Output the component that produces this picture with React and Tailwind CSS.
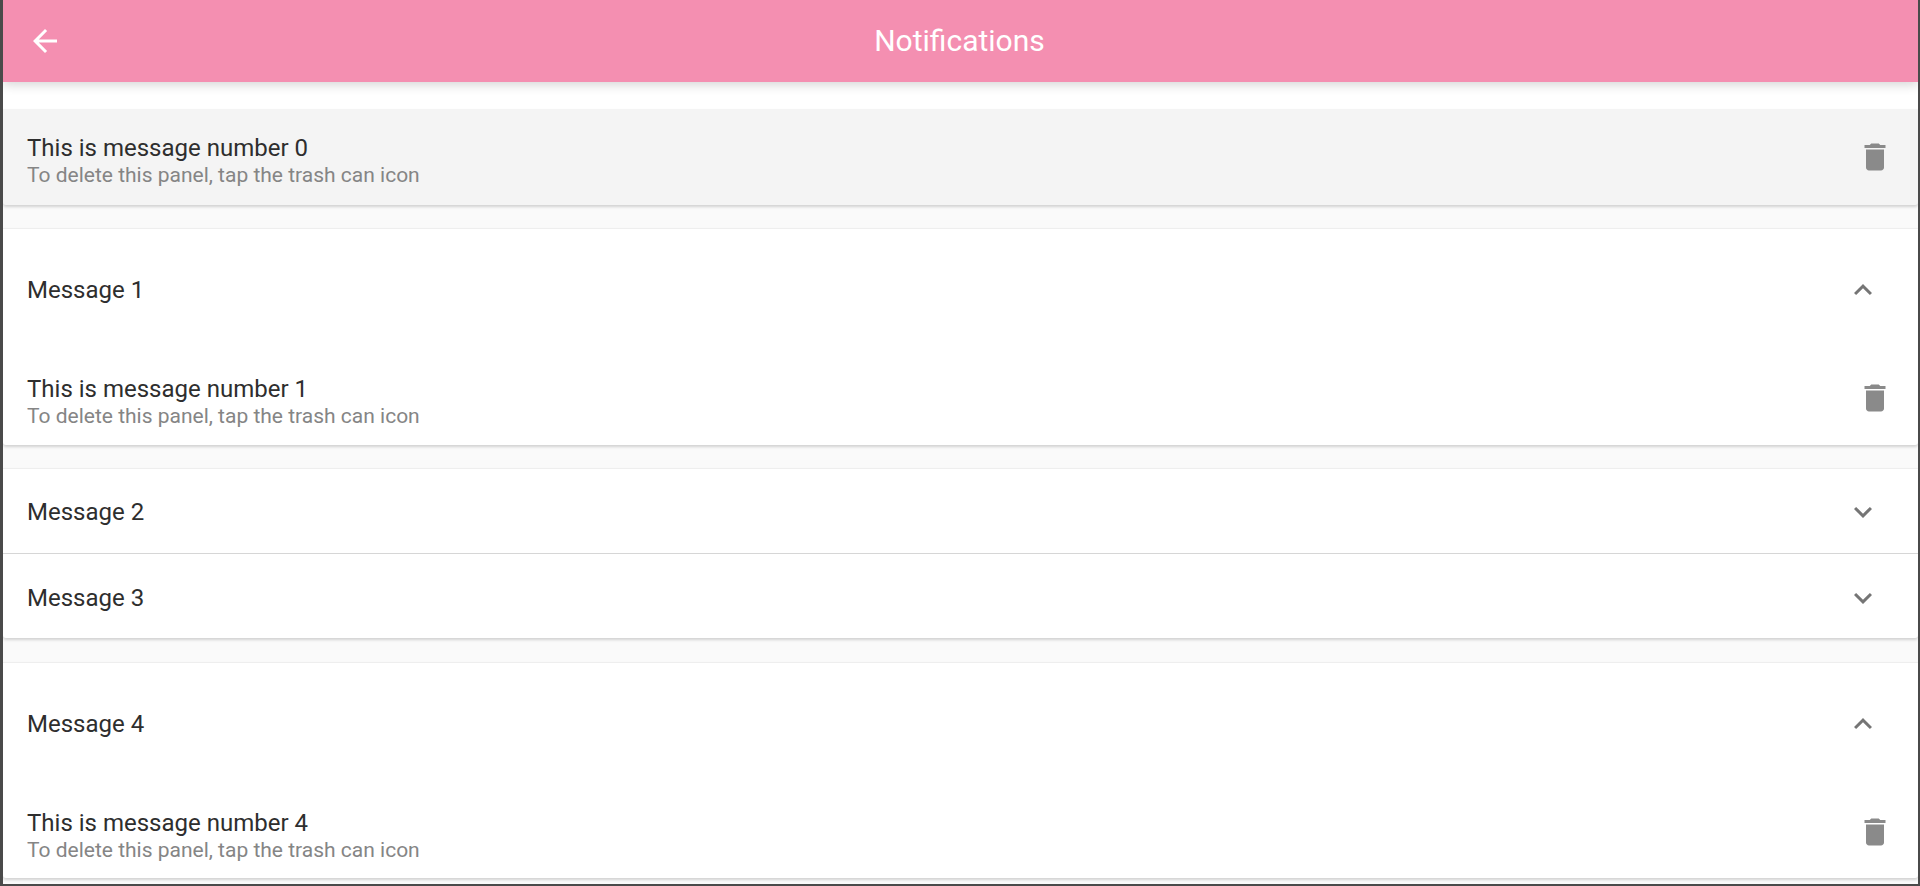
const TRASH = "M6 19c0 1.1.9 2 2 2h8c1.1 0 2-.9 2-2V7H6v12zM19 4h-3.5l-1-1h-5l-1 1H5v2h14V4z";
const UP = "M12 8l-6 6 1.41 1.41L12 10.83l4.59 4.58L18 14z";
const DOWN = "M16.59 8.59L12 13.17 7.41 8.59 6 10l6 6 6-6z";
const BACK = "M20 11H7.83l5.59-5.59L12 4l-8 8 8 8 1.41-1.41L7.83 13H20v-2z";

function Icon({ d, className }) {
  return (
    <svg viewBox="0 0 24 24" className={className} fill="currentColor">
      <path d={d} />
    </svg>
  );
}

function MessageBody({ n, className }) {
  return (
    <div className={"flex items-center pl-[24px] pr-[25px] " + className}>
      <div className="flex-1 min-w-0 pt-[6px]">
        <div className="text-[24px] leading-[29px] text-[#2e2e2e]">This is message number {n}</div>
        <div className="text-[21px] leading-[24px] text-[#858585]">To delete this panel, tap the trash can icon</div>
      </div>
      <Icon d={TRASH} className="w-[36px] h-[36px] text-[#8a8a8a]" />
    </div>
  );
}

function Head({ label, open, className }) {
  return (
    <div className={"flex items-center pl-[24px] pr-[37px] " + className}>
      <div className="flex-1 text-[24px] leading-[28px] text-[#2e2e2e]">{label}</div>
      <Icon d={open ? UP : DOWN} className="w-[36px] h-[36px] text-[#757575]" />
    </div>
  );
}

const shadow = "shadow-[0_2px_3px_rgba(0,0,0,0.16)]";

export default function App() {
  return (
    <div className="h-[886px] overflow-hidden bg-[#4a4a4a] pl-[3px] pr-[2px] pb-[2px] font-['Roboto',sans-serif]">
      <div className="h-full bg-white overflow-hidden flex flex-col">
        <header className="relative z-10 h-[82px] shrink-0 flex items-center bg-[#f48fb1] shadow-[0_3px_10px_rgba(0,0,0,0.16)]">
          <div className="pl-[24px] flex">
            <Icon d={BACK} className="w-[36px] h-[36px] text-white" />
          </div>
          <div className="flex-1 text-center text-[30px] font-normal text-white pr-[62px] pb-[1px]">Notifications</div>
        </header>
        <main className="flex-1 flex flex-col pt-[27px]">
          <div className="bg-[#fafafa] flex-1 flex flex-col">
            <MessageBody n={0} className={"h-[96px] bg-[#f4f4f4] rounded-b-[3px] " + shadow} />
            <div className="h-[23px]" />
            <div className={"bg-white border-t border-[#eeeeee] rounded-b-[3px] " + shadow}>
              <Head label="Message 1" open className="h-[121px]" />
              <MessageBody n={1} className="h-[95px] pt-[1px]" />
            </div>
            <div className="h-[23px]" />
            <div className={"bg-white border-t border-[#eeeeee] rounded-b-[3px] " + shadow}>
              <Head label="Message 2" className="h-[85px] pt-[2px] border-b border-[#d6d6d6]" />
              <Head label="Message 3" className="h-[84px] pt-[3px]" />
            </div>
            <div className="h-[24px]" />
            <div className={"bg-white border-t border-[#eeeeee] rounded-b-[3px] " + shadow}>
              <Head label="Message 4" open className="h-[120px] pt-[2px]" />
              <MessageBody n={4} className="h-[95px] pt-[3px]" />
            </div>
          </div>
        </main>
      </div>
    </div>
  );
}
